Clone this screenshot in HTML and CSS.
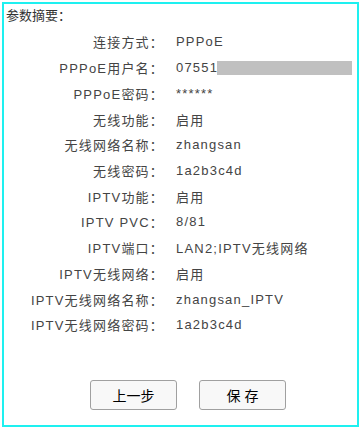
FILE: index.html
```html
<!DOCTYPE html>
<html lang="zh-CN">
<head>
<meta charset="UTF-8">
<title>参数摘要</title>
<link rel="stylesheet" href="styles.css">
</head>
<body>
<div class="panel">
    <div class="title">参数摘要：</div>
    <div class="summary">
        <div class="label">连接方式：</div><div class="value">PPPoE</div>
        <div class="label">PPPoE用户名：</div><div class="value">07551<span class="mask"></span></div>
        <div class="label">PPPoE密码：</div><div class="value">******</div>
        <div class="label">无线功能：</div><div class="value">启用</div>
        <div class="label">无线网络名称：</div><div class="value">zhangsan</div>
        <div class="label">无线密码：</div><div class="value">1a2b3c4d</div>
        <div class="label">IPTV功能：</div><div class="value">启用</div>
        <div class="label">IPTV PVC：</div><div class="value">8/81</div>
        <div class="label">IPTV端口：</div><div class="value">LAN2;IPTV无线网络</div>
        <div class="label">IPTV无线网络：</div><div class="value">启用</div>
        <div class="label">IPTV无线网络名称：</div><div class="value">zhangsan_IPTV</div>
        <div class="label">IPTV无线网络密码：</div><div class="value">1a2b3c4d</div>
    </div>
    <div class="actions">
        <button class="button">上一步</button>
        <button class="button">保 存</button>
    </div>
</div>
</body>
</html>
```

FILE: styles.css
```css
body {
    margin: 0;
    padding: 2px;
    font-family: "Liberation Sans", "Noto Sans CJK SC", sans-serif;
    font-size: 13px;
    color: #444444;
    background-color: #ffffff;
}

.panel {
    box-sizing: border-box;
    width: 357px;
    height: 425px;
    border: 2px solid #1ef0f0;
    padding: 2px 4px 0 2px;
    display: flex;
    flex-direction: column;
}

.title {
    line-height: 20px;
    color: #333333;
}

.summary {
    margin-top: 3px;
    display: grid;
    grid-template-columns: 158px 1fr;
    grid-auto-rows: 25.73px;
    column-gap: 12px;
    align-items: center;
    letter-spacing: 1.2px;
}

.label {
    text-align: right;
}

.value {
    display: flex;
    align-items: center;
    white-space: nowrap;
}

.mask {
    display: inline-block;
    width: 135px;
    height: 14px;
    margin-left: -1px;
    background-color: #c0c0c0;
}

.actions {
    margin-top: 42px;
    padding-left: 84px;
    display: flex;
    gap: 22px;
}

.button {
    width: 87px;
    height: 30px;
    padding: 0;
    background-color: #f8f8f8;
    border: 1px solid #a0a0a0;
    border-radius: 3px;
    font-family: "Liberation Sans", "Noto Sans CJK SC", sans-serif;
    font-size: 14px;
    color: #000000;
}
```
